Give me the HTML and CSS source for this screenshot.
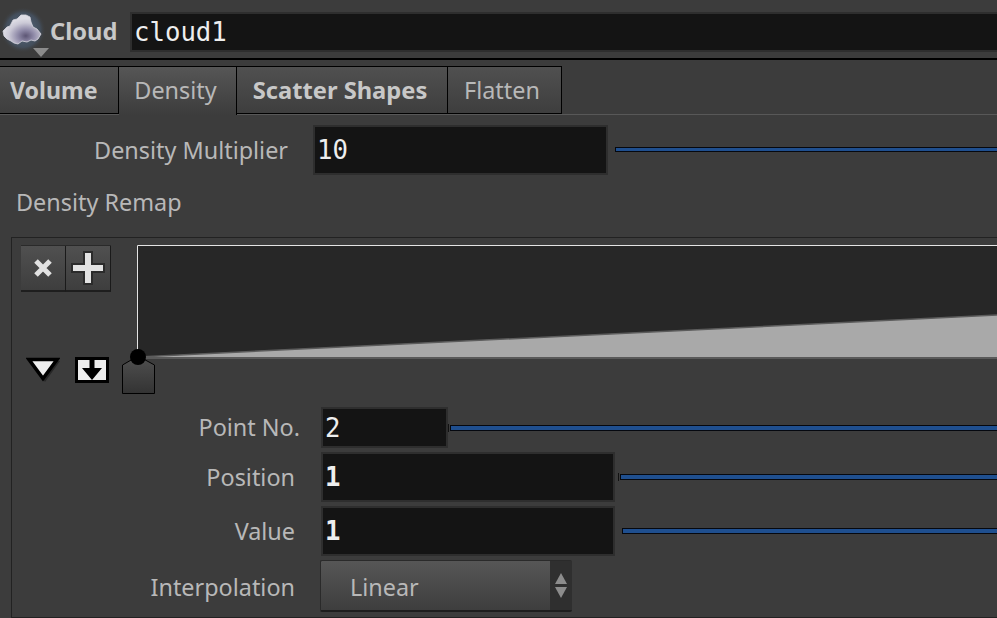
FILE: index.html
```html
<!DOCTYPE html>
<html lang="en">
<head>
  <meta charset="UTF-8" />
  <title>Cloud parameters</title>
  <link rel="stylesheet" href="styles.css">
</head>
<body>
  <!-- Node header -->
  <div class="node-header">
    <div class="node-icon">
      <svg width="48" height="48" viewBox="0 0 48 48">
        <defs>
          <radialGradient id="glow">
            <stop offset="0" stop-color="#6f8fb5" stop-opacity="0.7" />
            <stop offset="0.75" stop-color="#4c6380" stop-opacity="0.45" />
            <stop offset="1" stop-color="#3c3c3c" stop-opacity="0" />
          </radialGradient>
          <radialGradient id="cloudFill" cx="0.6" cy="0.72" r="0.6">
            <stop offset="0" stop-color="#5c5574" />
            <stop offset="0.35" stop-color="#8f8aa8" />
            <stop offset="0.75" stop-color="#cbc9d6" />
            <stop offset="1" stop-color="#dddce4" />
          </radialGradient>
        </defs>
        <circle cx="23" cy="22" r="23" fill="url(#glow)" />
        <path d="M3 23 L7 19 L10 18 L13 12 L17 11 L21 7 L26 7 L30 9 L31 14 L33 19 L37 21 L41 26 L38 31 L35 33 L31 32 L27 34 L22 33 L18 36 L14 35 L11 33 L7 31 L4 28 Z" fill="url(#cloudFill)" stroke="#d8d7df" stroke-width="0.8" />
      </svg>
      <span class="node-arrow"></span>
    </div>
    <span class="node-type">Cloud</span>
    <div class="field node-name">cloud1</div>
  </div>

  <!-- Tabs -->
  <div class="tabs">
    <div class="tab tab-bold tab-first">Volume</div>
    <div class="tab tab-active">Density</div>
    <div class="tab tab-bold tab-scatter">Scatter Shapes</div>
    <div class="tab tab-flatten">Flatten</div>
  </div>

  <div class="row row-density">
    <label class="label label-density">Density Multiplier</label>
    <div class="field field-density">10</div>
    <div class="slider slider-density"></div>
  </div>

  <div class="ramp-title">Density Remap</div>

  <!-- Ramp editor -->
  <div class="ramp-group">
    <div class="ramp-area">
      <div class="ramp-tools">
        <div class="btn-pair">
          <div class="btn">
            <svg width="22" height="22" viewBox="0 0 22 22"><path d="M4 4 L18 18 M18 4 L4 18" stroke="#e2e2e2" stroke-width="5" /></svg>
          </div>
          <div class="btn">
            <svg width="38" height="38" viewBox="0 0 38 38"><path d="M15 3 H23 V15 H35 V23 H23 V35 H15 V23 H3 V15 H15 Z" fill="#e2e2e2" stroke="#2b2b2b" stroke-width="2" /></svg>
          </div>
        </div>
        <div class="tool-row">
          <svg width="34" height="26" viewBox="0 0 34 26"><path d="M4 4 H34 L19 25 Z" fill="#262626" /><path d="M3 2.5 H31 L17 21.5 Z" fill="#eee" stroke="#000" stroke-width="3.5" /></svg>
          <svg width="34" height="26" viewBox="0 0 34 26"><rect x="1.5" y="1.5" width="31" height="23" fill="#eee" stroke="#000" stroke-width="3" /><path d="M14.5 3 H19.5 V11 H27 L17 23 L7 11 H14.5 Z" fill="#000" /></svg>
        </div>
      </div>
      <div class="ramp-view">
        <svg class="ramp-svg" width="860" height="114" viewBox="0 0 860 114">
          <rect width="860" height="112" fill="#272727" />
          <path d="M1 112 L860 70 V112 Z" fill="#a9a9a9" />
          <path d="M1 112 L860 70" stroke="#5c5c5c" stroke-width="1.5" />
          <path d="M0.5 112 V0.5 H860" fill="none" stroke="#e4e4e4" />
          <path d="M0 113 H860" stroke="#5a5a5a" stroke-width="2" />
        </svg>
        <svg class="ramp-handle" width="36" height="48" viewBox="0 0 36 48">
          <defs>
            <linearGradient id="handleFill" x1="0" y1="0" x2="0" y2="1">
              <stop offset="0" stop-color="#505050" />
              <stop offset="1" stop-color="#333" />
            </linearGradient>
          </defs>
          <path d="M17 8 L33.5 17 V45.5 H1.5 V17 Z" fill="url(#handleFill)" stroke="#000" />
          <circle cx="17" cy="9" r="8" fill="#000" />
        </svg>
      </div>
    </div>

    <div class="row row-point">
      <label class="label label-point">Point No.</label>
      <div class="field field-point">2</div>
      <div class="slider slider-point"></div>
    </div>
    <div class="row row-position">
      <label class="label">Position</label>
      <div class="field field-wide">1</div>
      <div class="slider slider-position"></div>
    </div>
    <div class="row row-value">
      <label class="label">Value</label>
      <div class="field field-wide">1</div>
      <div class="slider slider-value"></div>
    </div>
    <div class="row row-interp">
      <label class="label label-interp">Interpolation</label>
      <div class="select">
        <span class="select-text">Linear</span>
        <span class="select-arrows"></span>
      </div>
    </div>
  </div>
</body>
</html>
```

FILE: styles.css
```css
html, body {
  margin: 0;
  height: 100%;
  overflow: hidden;
}
body {
  width: 997px;
  height: 618px;
  background-color: #3c3c3c;
  color: #b8b8b8;
  font-family: "Noto Sans", Arial, sans-serif;
  font-size: 23.4px;
}

/* Header */
.node-header {
  display: flex;
  align-items: flex-start;
  height: 60px;
  padding-top: 12px;
  box-sizing: border-box;
  border-bottom: 2px solid #000;
}
.node-icon {
  position: relative;
  width: 50px;
  height: 46px;
}
.node-icon svg {
  position: absolute;
  left: 0;
  top: -4px;
}
.node-arrow {
  position: absolute;
  left: 33px;
  top: 36px;
  border-left: 8px solid transparent;
  border-right: 8px solid transparent;
  border-top: 9px solid #8c8c8c;
}
.node-type {
  width: 80px;
  font-weight: bold;
  font-size: 23.7px;
  line-height: 38px;
  color: #c8c8c8;
}
.field {
  box-sizing: border-box;
  background-color: #141414;
  border: 2px solid #2e2e2e;
  color: #eee;
  font-family: "DejaVu Sans Mono", monospace;
  font-size: 25.7px;
  padding-left: 2px;
  display: flex;
  align-items: center;
}
.node-name {
  flex: 1;
  height: 40px;
  margin-right: -2px;
}

/* Tabs */
.tabs {
  display: flex;
  height: 55px;
  padding-top: 6px;
  box-sizing: border-box;
  border-bottom: 1px solid #585858;
}
.tab {
  box-sizing: border-box;
  height: 48px;
  border: 1px solid #000;
  border-left: none;
  background: linear-gradient(#505050, #3e3e3e);
  text-align: center;
  line-height: 47px;
  color: #b8b8b8;
}
.tab-bold {
  font-weight: bold;
  font-size: 23.7px;
  color: #c8c8c8;
}
.tab-first {
  width: 119px;
  font-size: 23.2px;
  text-align: left;
  padding-left: 10px;
}
.tab-active {
  width: 118px;
  height: 49px;
  padding-right: 4px;
  border-bottom: none;
  background: linear-gradient(#565656, #3c3c3c);
}
.tab-scatter {
  width: 212px;
  padding-right: 4px;
  border-left: 1px solid #000;
  margin-left: -1px;
}
.tab-flatten {
  width: 114px;
  padding-right: 5px;
}

/* Parameter rows */
.row {
  display: flex;
  align-items: center;
}
.row-density {
  margin-top: 10px;
  height: 50px;
}
.label {
  box-sizing: border-box;
  width: 309px;
  padding-right: 26px;
  text-align: right;
}
.label-density {
  width: 313px;
  padding-right: 25px;
}
.label-point {
  padding-right: 21px;
  padding-bottom: 2px;
}
.label-interp {
  padding-top: 2px;
}
.field-density {
  width: 295px;
  height: 50px;
}
.slider {
  position: relative;
  flex: 1;
  box-sizing: border-box;
  height: 6px;
  margin-left: 7px;
  background-color: #1f4f8f;
  border: 1px solid #05080f;
  border-right: none;
}
.slider-density {
  height: 5px;
  margin-bottom: 1px;
}
.ramp-title {
  margin: 13px 0 0 16px;
  height: 49px;
  line-height: 28px;
}

/* Ramp editor */
.ramp-group {
  margin-left: 11px;
  height: 381px;
  padding-top: 7px;
  box-sizing: border-box;
  border: 1px solid #222;
  border-right: none;
}
.ramp-area {
  display: flex;
  height: 149px;
  padding-left: 8px;
}
.ramp-tools {
  width: 117px;
  display: flex;
  flex-direction: column;
  justify-content: space-between;
}
.btn-pair {
  display: flex;
  width: 90px;
  height: 47px;
  margin-left: 1px;
  border-top: 1px solid #2a2a2a;
  box-sizing: border-box;
}
.btn {
  flex: 1;
  display: flex;
  align-items: center;
  justify-content: center;
  background: linear-gradient(#505050, #3e3e3e);
  border-right: 1px solid #1a1a1a;
  border-bottom: 2px solid #1e1e1e;
}
.tool-row {
  display: flex;
  gap: 15px;
  padding: 0 0 11px 6px;
}
.ramp-view {
  position: relative;
  flex: 1;
}
.ramp-svg {
  display: block;
}
.ramp-handle {
  position: absolute;
  left: -16px;
  top: 103px;
}
.row-point {
  margin-top: 13px;
  height: 41px;
}
.field-point {
  width: 127px;
  height: 41px;
}
.slider-point {
  margin-left: 2px;
}
.slider-point::before,
.slider-position::before {
  content: "";
  position: absolute;
  left: -3px;
  top: -2px;
  width: 1px;
  height: 8px;
  background-color: #111;
}
.row-position {
  margin-top: 4px;
  height: 50px;
}
.row-value {
  margin-top: 4px;
  height: 50px;
}
.field-wide {
  width: 294px;
  height: 50px;
  font-weight: bold;
}
.slider-position {
  margin-left: 5px;
}
.slider-value {
  margin-left: 7px;
}
.row-interp {
  margin-top: 4px;
  height: 52px;
}
.select {
  position: relative;
  box-sizing: border-box;
  width: 252px;
  height: 52px;
  margin-left: -1px;
  display: flex;
  align-items: center;
  background: linear-gradient(#565656, #3e3e3e);
  border-top: 1px solid #2a2a2a;
  border-bottom: 2px solid #1e1e1e;
  border-left: 1px solid #2a2a2a;
  border-radius: 2px;
}
.select-text {
  padding: 2px 0 0 29px;
}
.select-arrows {
  position: absolute;
  right: 0;
  top: 0;
  bottom: 0;
  width: 22px;
  background-color: #2f2f2f;
}
.select-arrows::before,
.select-arrows::after {
  content: "";
  position: absolute;
  left: 5px;
  border-left: 6px solid transparent;
  border-right: 6px solid transparent;
}
.select-arrows::before {
  top: 12px;
  border-bottom: 11px solid #8c8c8c;
}
.select-arrows::after {
  top: 26px;
  border-top: 11px solid #8c8c8c;
}
```
